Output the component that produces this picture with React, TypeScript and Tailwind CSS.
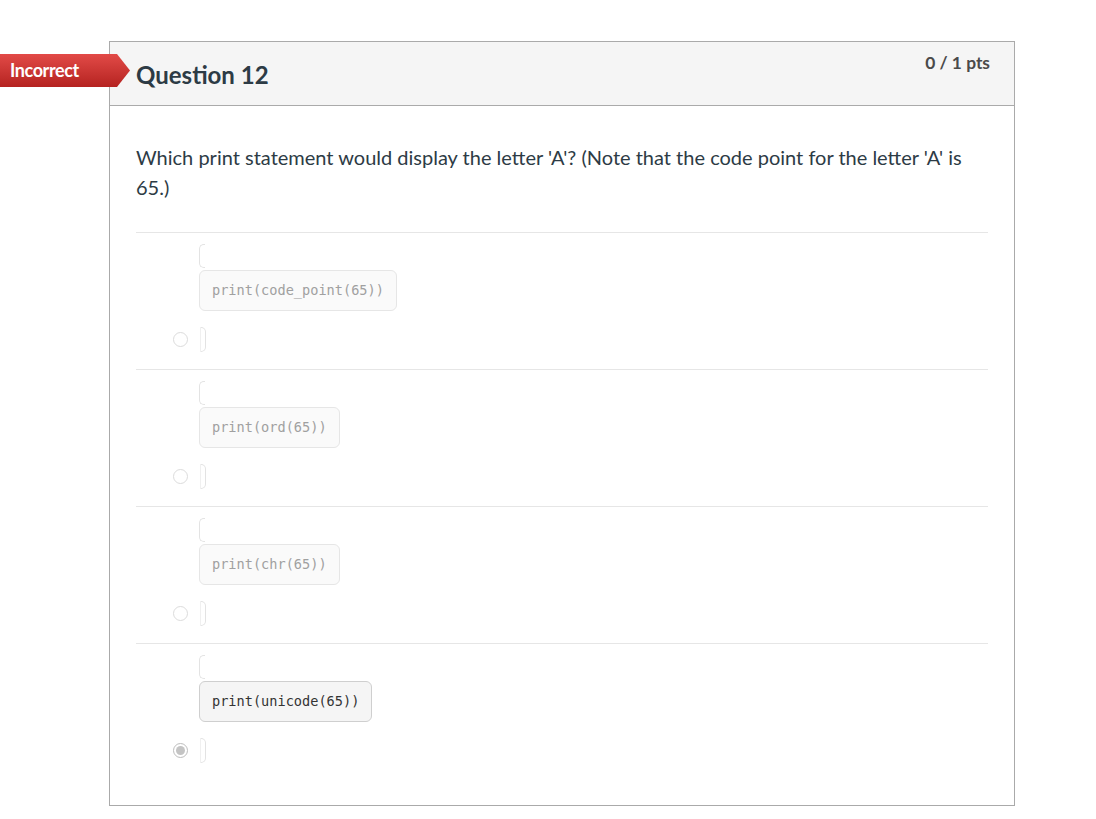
import React from 'react';

const answers = [
  { code: 'print(code_point(65))', picked: false },
  { code: 'print(ord(65))', picked: false },
  { code: 'print(chr(65))', picked: false },
  { code: 'print(unicode(65))', picked: true },
];

const Answer = ({ code, picked }: { code: string; picked: boolean }) => (
  <div className="border-t border-[#e6e6e6] pt-[11px] pb-[17px]">
    <div className="ml-[63px] h-[24px] w-[6px] rounded-l-[5px] border-y border-l border-[#e3e3e3]" />
    <div className="mt-[2px] ml-[63px] flex">
      <div
        className={
          'rounded-[6px] border px-[12px] py-[10px] leading-[19px] text-[13.6px] ' +
          (picked
            ? 'border-[#cfcfcf] bg-[#f5f5f5] text-[#333]'
            : 'border-[#e6e6e6] bg-[#fafafa] text-[#a0a0a0]')
        }
        style={{ fontFamily: '"DejaVu Sans Mono", "Liberation Mono", monospace' }}
      >
        {code}
      </div>
    </div>
    <div className="mt-[16px] ml-[37px] flex items-center gap-[12px]">
      <div
        className={
          'flex h-[15px] w-[15px] items-center justify-center rounded-full border ' +
          (picked ? 'border-[#bdbdbd]' : 'border-[#dcdcdc]')
        }
      >
        {picked && <div className="h-[9px] w-[9px] rounded-full bg-[#c4c4c4]" />}
      </div>
      <div className="h-[25px] w-[6px] rounded-r-[5px] border-y border-r border-l border-[#e3e3e3] border-l-[#f0f0f0]" />
    </div>
  </div>
);

export default function App() {
  return (
    <div
      className="relative min-h-[819px] w-[1096px] bg-white pt-[41px] text-[#2d3b45]"
      style={{ fontFamily: 'Lato, "Open Sans", sans-serif' }}
    >
      <div className="absolute left-0 top-[54px] z-10 flex h-[33px] items-center">
        <div className="flex h-full w-[117px] items-center bg-gradient-to-b from-[#e24a47] to-[#b52220] pl-[10px] text-[18px] font-bold tracking-[-0.4px] text-white">
          Incorrect
        </div>
        <div
          className="h-full w-[13px] bg-gradient-to-b from-[#e24a47] to-[#b52220]"
          style={{ clipPath: 'polygon(0 0, 100% 50%, 0 100%)' }}
        />
      </div>

      <div className="ml-[109px] w-[906px] border border-[#aaaaaa]">
        <div className="flex h-[64px] items-start justify-between border-b border-[#aaaaaa] bg-[#f5f5f5] pl-[26px] pr-[24px]">
          <div className="pt-[17px] text-[24px] font-bold leading-[32px]">Question 12</div>
          <div className="pt-[9px] text-[17.4px] font-bold leading-[24px] text-[#4a4a4a]">0 / 1 pts</div>
        </div>
        <div className="px-[26px] pt-[36px] pb-[25px]">
          <p className="text-[20px] leading-[30px]">
            Which print statement would display the letter 'A'? (Note that the code point for the letter 'A' is 65.)
          </p>
          <div className="mt-[30px]">
            {answers.map((a) => (
              <Answer key={a.code} code={a.code} picked={a.picked} />
            ))}
          </div>
        </div>
      </div>
    </div>
  );
}
